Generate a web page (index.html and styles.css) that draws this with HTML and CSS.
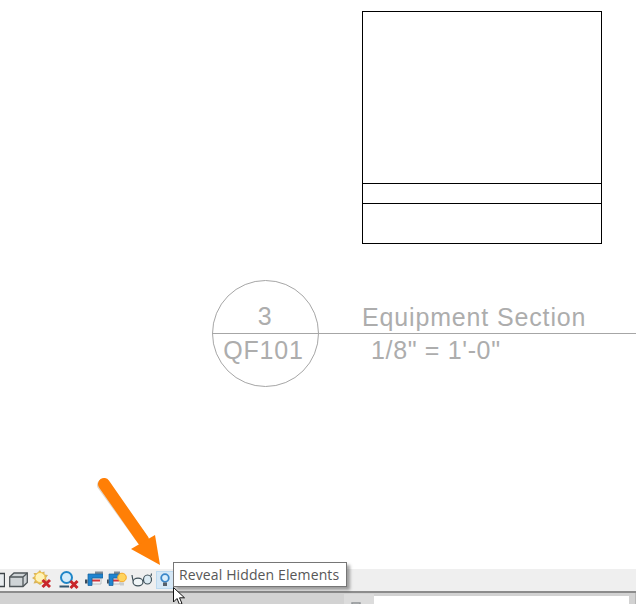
FILE: index.html
```html
<!DOCTYPE html>
<html>
<head lang="en">
    <meta charset="UTF-8">
    <title>Reveal Hidden Elements</title>
    <link rel="stylesheet" href="styles.css">
</head>
<body>
<div class="app">
    <svg class="sheet" width="636" height="569" viewBox="0 0 636 569">
        <rect class="ink" x="362.5" y="11.5" width="239" height="232"/>
        <line class="ink" x1="362" y1="183.5" x2="602" y2="183.5"/>
        <line class="ink" x1="362" y1="203.5" x2="602" y2="203.5"/>
        <circle class="mark" cx="265.5" cy="333.5" r="53"/>
        <line class="mark" x1="212" y1="333.5" x2="636" y2="333.5"/>
        <text class="label" x="265" y="325" text-anchor="middle">3</text>
        <text class="label" x="263.500" y="359" text-anchor="middle">QF101</text>
        <text class="label title" x="362" y="326">Equipment Section</text>
        <text class="label scale" x="371" y="359">1/8" = 1'-0"</text>
    </svg>

    <div class="status">
        <div class="tools">
            <svg class="tool" width="5" height="20" viewBox="0 0 5 20">
                <path d="M-4 3.500H4.500V16.500H-4" fill="#e8ecef" stroke="#3c4348" stroke-width="1.300"/>
            </svg>
            <svg class="tool" width="19" height="20" viewBox="0 0 19 20">
                <path d="M.7 7 5 3H18.300V12.500L14 16.500H.7Z" fill="#cfd4d7" stroke="#50575b" stroke-width="1.300"/>
                <path d="M.7 7H14V16.500M14 7 18.300 3" fill="none" stroke="#50575b" stroke-width="1.300"/>
            </svg>
            <svg class="tool" width="20" height="20" viewBox="0 0 20 20">
                <path d="M8 0 9.500 2.500 12.500 1.500 12.500 4.500 16 5 14 8 15 11 12 12 8 15 5 13 1.500 13.500 3 10 0 8 3 6 1.500 3 5 3Z" fill="#d9b45c"/>
                <circle cx="8" cy="7.500" r="5" fill="#fff3b8" stroke="#f5c84a"/>
                <path d="M10.500 10 18 17M18 10 10.500 17" stroke="#c8262b" stroke-width="3"/>
            </svg>
            <svg class="tool" width="23" height="20" viewBox="0 0 23 20">
                <circle cx="10.500" cy="7.500" r="5.500" fill="#d5ecfa" stroke="#1f86c8" stroke-width="2"/>
                <path d="M3.500 16.500H13" stroke="#33566e" stroke-width="2"/>
                <path d="M14.500 11 21.500 18M21.500 11 14.500 18" stroke="#c8262b" stroke-width="3"/>
            </svg>
            <svg class="tool" width="20" height="20" viewBox="0 0 20 20">
                <path d="M12 1.500H20V4H12Z" fill="#7d8a96"/>
                <path d="M9 8H18V14H9Z" fill="#f4f4f4" stroke="#a9b2b8" stroke-width=".8"/>
                <path d="M9 10.500H17" stroke="#d4343a" stroke-width="2"/>
                <path d="M5 4H20V8H9V15.500H5Z" fill="#1f84d0" stroke="#1a5e96" stroke-width=".7"/>
                <path d="M2 9.500H4.500V13.500H2Z" fill="#3b4c5c"/>
            </svg>
            <svg class="tool" width="20" height="20" viewBox="0 0 20 20">
                <path d="M7 1.500H13V4H7Z" fill="#7d8a96"/>
                <path d="M6 8H13V14H6Z" fill="#f4f4f4" stroke="#a9b2b8" stroke-width=".8"/>
                <path d="M6 10.500H12" stroke="#d4343a" stroke-width="2"/>
                <path d="M2 4H14V8H6V15.500H2Z" fill="#1f84d0" stroke="#1a5e96" stroke-width=".7"/>
                <path d="M0 9.500H1.800V13.500H0Z" fill="#3b4c5c"/>
                <circle cx="15" cy="7.500" r="4.300" fill="#ffd35c" stroke="#f5a623"/>
                <path d="M13 12.500H17V15.500H13Z" fill="#c8ccce"/>
            </svg>
            <svg class="tool" width="21" height="20" viewBox="0 0 21 20">
                <ellipse cx="7" cy="12" rx="5" ry="3.800" fill="#f0f5f7" stroke="#3f5059" stroke-width="1.200"/>
                <ellipse cx="16.500" cy="9.500" rx="4" ry="4.500" fill="#dcebf3" stroke="#3f5059" stroke-width="1.200"/>
                <path d="M1 5C1.500 8 1.500 10 2.500 11M11.500 11 12.700 10.500M20 6 20.500 3.500" fill="none" stroke="#3f5059" stroke-width="1.200"/>
            </svg>
            <div class="reveal">
                <svg width="12" height="18" viewBox="0 0 12 18">
                    <circle cx="6" cy="7" r="3.800" fill="#d9eefc" stroke="#3a86c8" stroke-width="1.800"/>
                    <path d="M4 11.500H8V15H4Z" fill="#55606b"/>
                </svg>
            </div>
        </div>
    </div>

    <div class="footer">
        <div class="filter">
            <svg width="15" height="10" viewBox="0 0 15 10">
                <path d="M1 1H9V5H1ZM6 5H14V8H6Z" fill="#eee" stroke="#8d9194" stroke-width="1.400"/>
            </svg>
        </div>
        <div class="field"></div>
        <div class="end"></div>
    </div>

    <svg class="arrow" width="70" height="100" viewBox="0 0 70 100">
        <path d="M6 9 43 60" fill="none" stroke="#7f5a30" stroke-opacity=".25" stroke-width="12" stroke-linecap="round"/>
        <path d="M7 8 46 64" fill="none" stroke="#ff7f06" stroke-width="12" stroke-linecap="round"/>
        <path d="M34 73 58 59 63 89Z" fill="#ff7f06"/>
    </svg>

    <div class="tooltip">Reveal Hidden Elements</div>

    <svg class="cursor" width="15" height="20" viewBox="0 0 15 20">
        <path d="M.5.5V15L4 11.500 6.500 17.500 9 16.500 6.500 10.800H11.500Z" fill="#fff" stroke="#111"/>
    </svg>
</div>
</body>
</html>
```

FILE: styles.css
```css
* {
    margin: 0;
    padding: 0;
    box-sizing: border-box;
}

body {
    background-color: #fff;
    overflow: hidden;
}

.app {
    width: 636px;
    height: 604px;
    position: relative;
    display: flex;
    flex-direction: column;
    overflow: hidden;
    font-family: "Liberation Sans", Arial, sans-serif;
}

.sheet {
    display: block;
    flex: none;
}

.ink {
    fill: none;
    stroke: #000;
    stroke-width: 1;
}

.mark {
    fill: none;
    stroke: #a6a6a6;
    stroke-width: 1;
}

.label {
    font-family: "Liberation Sans", Arial, sans-serif;
    font-size: 25px;
    letter-spacing: .8px;
    fill: #adadad;
}

.title {
    letter-spacing: .85px;
}

.scale {
    letter-spacing: .65px;
}

.status {
    height: 24px;
    flex: none;
    background-color: #efefef;
    border-bottom: 2px solid #8c8c8c;
}

.tools {
    display: flex;
    align-items: center;
    gap: 4px;
    height: 20px;
    margin-top: 1px;
}

.tool {
    display: block;
    flex: none;
}

.reveal {
    width: 18px;
    height: 18px;
    display: flex;
    align-items: center;
    justify-content: center;
    background-color: #d6e8f6;
    border: 1px solid #bcd9ef;
}

.footer {
    flex: 1;
    display: flex;
    background-color: #d2d2d2;
    padding-left: 344px;
}

.filter {
    width: 30px;
    margin-top: 1px;
    padding: 4px 0 0 7px;
    background-color: #dcdcdc;
}

.field {
    width: 255px;
    margin-top: 3px;
    background-color: #fff;
}

.end {
    width: 3px;
    margin-left: 4px;
    border-right: 1px solid #b8b8b8;
}

.arrow {
    position: absolute;
    left: 97px;
    top: 476px;
}

.tooltip {
    position: absolute;
    left: 173px;
    top: 562px;
    width: 174px;
    height: 25px;
    border: 1px solid #767676;
    background-color: #fff;
    box-shadow: 3px 3px 3px rgba(0, 0, 0, .35);
    font-family: "Open Sans", sans-serif;
    font-size: 14px;
    letter-spacing: .12px;
    line-height: 23px;
    padding-left: 5px;
    color: #575757;
    white-space: nowrap;
}

.cursor {
    position: absolute;
    left: 173px;
    top: 587px;
    display: block;
}
```
